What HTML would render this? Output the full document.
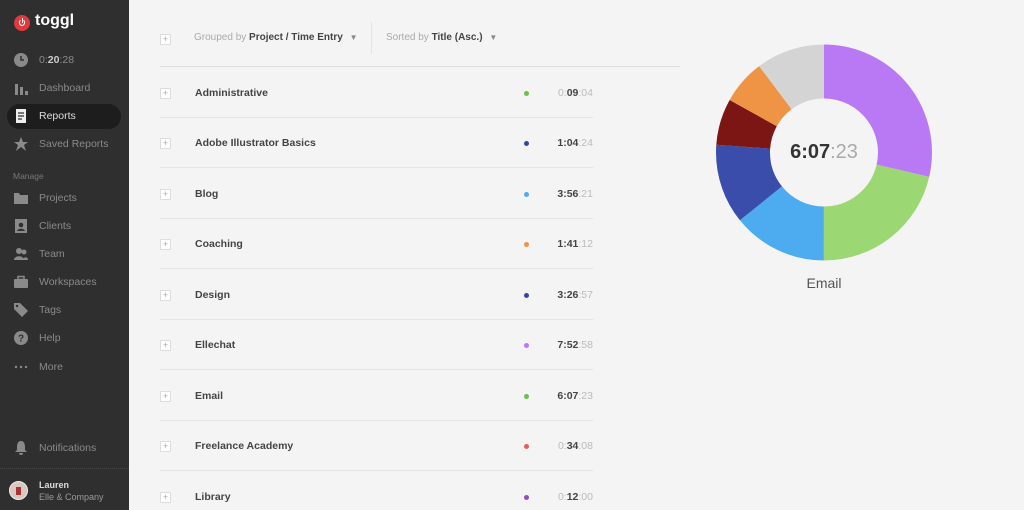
<!DOCTYPE html>
<html style="width:1024px;height:510px;overflow:hidden"><head><meta charset="utf-8">
<style>
*{margin:0;padding:0;box-sizing:border-box}
body{width:1024px;height:510px;overflow:hidden;background:#f4f4f4;font-family:"Liberation Sans",sans-serif;position:relative}
#sb{position:absolute;left:0;top:0;width:129px;height:510px;background:#2f2f2f}
.it{position:absolute;left:14px;height:20px;display:flex;align-items:center;color:#8a8a8a;font-size:10.5px}
.it svg{width:14px;height:14px;margin-right:11px;fill:#8a8a8a}
.act{position:absolute;left:7px;top:104px;width:114px;height:25px;background:#1d1d1d;border-radius:13px}
.row{position:absolute;left:160px;width:433px;height:50px;border-bottom:1px solid #e4e4e4}
.pl{position:absolute;left:0;width:11px;height:11px;border:1px solid #ddd;background:#fff;font-size:9px;color:#aaa;text-align:center;line-height:9px}
.nm{position:absolute;left:35px;font-size:10.5px;font-weight:bold;color:#444}
.dot{position:absolute;left:364px;width:5px;height:5px;border-radius:50%}
.tm{position:absolute;right:0;font-size:10.5px;color:#bbb}
.tm b{color:#444}
</style></head><body>
<div id="sb">
 <div style="position:absolute;left:14px;top:15px;width:16px;height:16px;border-radius:50%;background:#e0393e"></div>
 <div style="position:absolute;left:19px;top:19px;width:6px;height:7px;border:1.5px solid #fff;border-radius:50%;border-top-color:transparent"></div>
 <div style="position:absolute;left:21.5px;top:18px;width:1.5px;height:5px;background:#fff"></div>
 <div style="position:absolute;left:35px;top:12px;color:#fff;font-weight:bold;font-size:16px">toggl</div>
 <div class="act"></div>
 <div class="it" style="top:50px"><svg viewBox="0 0 14 14"><circle cx="7" cy="7" r="7"/><path d="M7 3v4h3" stroke="#2f2f2f" stroke-width="1.5" fill="none"/></svg>0:<b style="color:#ccc">20</b>:28</div>
 <div class="it" style="top:78px"><svg viewBox="0 0 14 14"><rect x="1" y="3" width="3" height="11"/><rect x="6" y="6" width="3" height="8"/><rect x="11" y="10" width="3" height="4"/></svg>Dashboard</div>
 <div class="it" style="top:106px;color:#ddd"><svg viewBox="0 0 14 14" style="fill:#eee"><rect x="2" y="0" width="10" height="14"/><path d="M4 4h6M4 7h6M4 10h4" stroke="#2f2f2f" stroke-width="1.3"/></svg>Reports</div>
 <div class="it" style="top:134px"><svg viewBox="0 0 14 14"><path d="M7 0l2 5h5l-4 3 2 6-5-4-5 4 2-6-4-3h5z"/></svg>Saved Reports</div>
 <div style="position:absolute;left:13px;top:171px;color:#777;font-size:8.5px">Manage</div>
 <div class="it" style="top:188px"><svg viewBox="0 0 14 14"><path d="M0 2h5l1 2h8v9H0z"/></svg>Projects</div>
 <div class="it" style="top:216px"><svg viewBox="0 0 14 14"><rect x="1" y="0" width="12" height="14"/><circle cx="7" cy="6" r="2.3" fill="#2f2f2f"/><path d="M3 12c1-3 7-3 8 0" fill="#2f2f2f"/></svg>Clients</div>
 <div class="it" style="top:244px"><svg viewBox="0 0 14 14"><circle cx="5" cy="4" r="3"/><circle cx="10" cy="5" r="2.5"/><path d="M0 13c0-5 10-5 10 0zM9 13c0-3 5-4 5 0z"/></svg>Team</div>
 <div class="it" style="top:272px"><svg viewBox="0 0 14 14"><rect x="0" y="4" width="14" height="9" rx="1"/><rect x="4" y="1.5" width="6" height="3" fill="none" stroke="#8a8a8a" stroke-width="1.5"/></svg>Workspaces</div>
 <div class="it" style="top:300px"><svg viewBox="0 0 14 14"><path d="M0 0h6l8 8-6 6-8-8z"/><circle cx="3" cy="3" r="1.2" fill="#2f2f2f"/></svg>Tags</div>
 <div class="it" style="top:328px"><svg viewBox="0 0 14 14"><circle cx="7" cy="7" r="7"/><text x="7" y="10.5" font-size="10" text-anchor="middle" fill="#2f2f2f" font-weight="bold" font-family="Liberation Sans">?</text></svg>Help</div>
 <div class="it" style="top:357px"><svg viewBox="0 0 14 14"><circle cx="2" cy="7" r="1.2"/><circle cx="7" cy="7" r="1.2"/><circle cx="12" cy="7" r="1.2"/></svg>More</div>
 <div class="it" style="top:438px"><svg viewBox="0 0 14 14"><path d="M7 0c3 0 4 3 4 6v3l2 2H1l2-2V6c0-3 1-6 4-6zM5 12h4a2 2 0 0 1-4 0z"/></svg>Notifications</div>
 <div style="position:absolute;left:0;top:468px;width:129px;border-top:1px dotted #444"></div>
 <div style="position:absolute;left:9px;top:481px;width:19px;height:19px;border-radius:50%;background:#d8c8c0;border:1px solid #eee"></div>
 <div style="position:absolute;left:16px;top:487px;width:5px;height:8px;background:#a33"></div>
 <div style="position:absolute;left:39px;top:480px;color:#ddd;font-size:9px;font-weight:bold">Lauren</div>
 <div style="position:absolute;left:39px;top:492px;color:#999;font-size:9px">Elle &amp; Company</div>
</div>

<div class="pl" style="top:34px;left:160px">+</div>
<div style="position:absolute;left:194px;top:32px;font-size:10px;color:#aaa">Grouped by <b style="color:#444">Project / Time Entry</b> <span style="color:#888;font-size:8px;margin-left:4px">▼</span></div>
<div style="position:absolute;left:371px;top:22px;width:1px;height:32px;background:#e3e3e3"></div>
<div style="position:absolute;left:386px;top:32px;font-size:10px;color:#aaa">Sorted by <b style="color:#444">Title (Asc.)</b> <span style="color:#888;font-size:8px;margin-left:4px">▼</span></div>
<div style="position:absolute;left:160px;top:66px;width:520px;height:1px;background:#ddd"></div>

<div class="row" style="top:68px"><div class="pl" style="top:20px">+</div><div class="nm" style="top:19px">Administrative</div><div class="dot" style="top:23px;background:#6cc04a"></div><div class="tm" style="top:19px">0:<b>09</b>:04</div></div>
<div class="row" style="top:118px"><div class="pl" style="top:20px">+</div><div class="nm" style="top:19px">Adobe Illustrator Basics</div><div class="dot" style="top:23px;background:#3348a0"></div><div class="tm" style="top:19px"><b>1:04</b>:24</div></div>
<div class="row" style="top:169px"><div class="pl" style="top:20px">+</div><div class="nm" style="top:19px">Blog</div><div class="dot" style="top:23px;background:#4dabf0"></div><div class="tm" style="top:19px"><b>3:56</b>:21</div></div>
<div class="row" style="top:219px"><div class="pl" style="top:20px">+</div><div class="nm" style="top:19px">Coaching</div><div class="dot" style="top:23px;background:#ef9344"></div><div class="tm" style="top:19px"><b>1:41</b>:12</div></div>
<div class="row" style="top:270px"><div class="pl" style="top:20px">+</div><div class="nm" style="top:19px">Design</div><div class="dot" style="top:23px;background:#3348a0"></div><div class="tm" style="top:19px"><b>3:26</b>:57</div></div>
<div class="row" style="top:320px"><div class="pl" style="top:20px">+</div><div class="nm" style="top:19px">Ellechat</div><div class="dot" style="top:23px;background:#b978f4"></div><div class="tm" style="top:19px"><b>7:52</b>:58</div></div>
<div class="row" style="top:371px"><div class="pl" style="top:20px">+</div><div class="nm" style="top:19px">Email</div><div class="dot" style="top:23px;background:#6cc04a"></div><div class="tm" style="top:19px"><b>6:07</b>:23</div></div>
<div class="row" style="top:421px"><div class="pl" style="top:20px">+</div><div class="nm" style="top:19px">Freelance Academy</div><div class="dot" style="top:23px;background:#e0605a"></div><div class="tm" style="top:19px">0:<b>34</b>:08</div></div>
<div class="row" style="top:472px;height:38px;border:none"><div class="pl" style="top:20px">+</div><div class="nm" style="top:19px">Library</div><div class="dot" style="top:23px;background:#9050c0"></div><div class="tm" style="top:19px">0:<b>12</b>:00</div></div>

<svg style="position:absolute;left:0;top:0" width="1024" height="510">
<g transform="rotate(-90 824 152.5)" fill="none" stroke-width="54">
<circle cx="824" cy="152.5" r="81" stroke="#b978f4" stroke-dasharray="145.6 600" stroke-dashoffset="0"/>
<circle cx="824" cy="152.5" r="81" stroke="#9bd773" stroke-dasharray="108.9 600" stroke-dashoffset="-145.6"/>
<circle cx="824" cy="152.5" r="81" stroke="#4dabf0" stroke-dasharray="72.1 600" stroke-dashoffset="-254.5"/>
<circle cx="824" cy="152.5" r="81" stroke="#3a4daa" stroke-dasharray="60.8 600" stroke-dashoffset="-326.6"/>
<circle cx="824" cy="152.5" r="81" stroke="#7c1614" stroke-dasharray="35.3 600" stroke-dashoffset="-387.4"/>
<circle cx="824" cy="152.5" r="81" stroke="#ef9344" stroke-dasharray="33.9 600" stroke-dashoffset="-422.7"/>
<circle cx="824" cy="152.5" r="81" stroke="#d4d4d4" stroke-dasharray="52.3 600" stroke-dashoffset="-456.6"/>
</g>
<text x="824" y="158" text-anchor="middle" font-family="Liberation Sans" font-size="20" fill="#333"><tspan font-weight="bold">6:07</tspan><tspan fill="#aaa">:23</tspan></text>
<text x="824" y="288" text-anchor="middle" font-family="Liberation Sans" font-size="14" fill="#555">Email</text>
</svg>
</body></html>
